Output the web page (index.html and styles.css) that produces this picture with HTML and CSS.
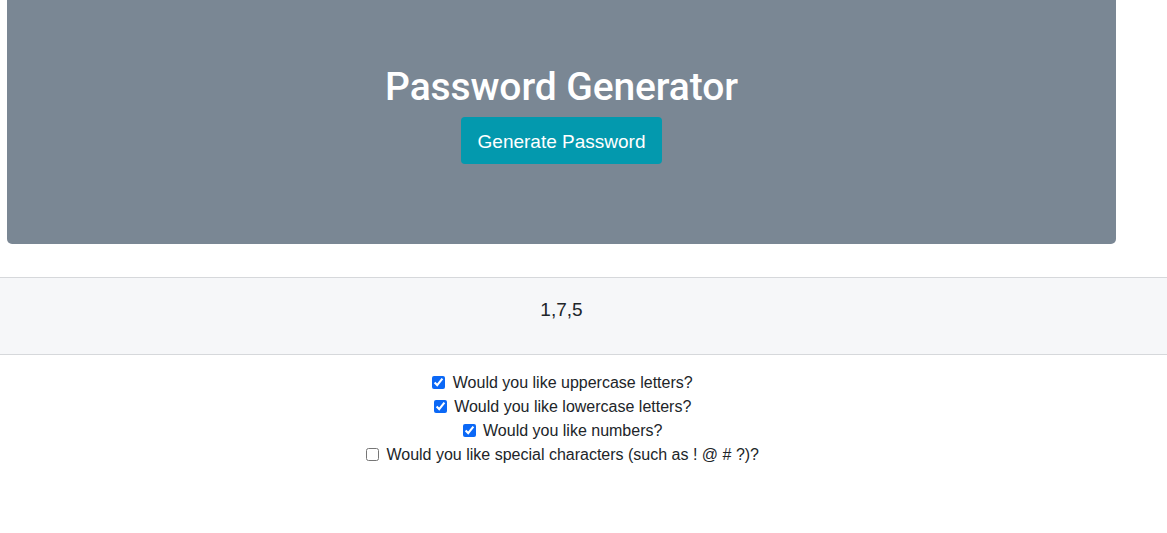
FILE: index.html
```html
<!DOCTYPE html>
<html lang="en">
<head>
<meta charset="utf-8">
<title>Password Generator</title>
<link rel="stylesheet" href="styles.css">
</head>
<body>
  <header class="jumbotron">
    <h1 class="title">Password Generator</h1>
    <button class="btn-generate" type="button">Generate Password</button>
  </header>
  <section class="result-bar">
    <p class="result">1,7,5</p>
  </section>
  <section class="options">
    <label class="option"><input type="checkbox" checked> Would you like uppercase letters?</label>
    <label class="option"><input type="checkbox" checked> Would you like lowercase letters?</label>
    <label class="option"><input type="checkbox" checked> Would you like numbers?</label>
    <label class="option"><input type="checkbox"> Would you like special characters (such as ! @ # ?)?</label>
  </section>
</body>
</html>
```

FILE: styles.css
```css
html, body {
  margin: 0;
  padding: 0;
}
body {
  font-family: "Liberation Sans", Arial, sans-serif;
  font-size: 16px;
  line-height: 1.5;
  color: #212529;
  background: #ffffff;
  width: 1167px;
  height: 533px;
  overflow: hidden;
}
.jumbotron {
  margin: 0 51px 33px 7px;
  padding: 63px 32px 80px;
  background: #7a8794;
  border-radius: 0 0 5px 5px;
  display: flex;
  flex-direction: column;
  align-items: center;
}
.title {
  margin: 0 0 6px;
  font-family: Roboto, "Liberation Sans", sans-serif;
  font-weight: 500;
  font-size: 39px;
  line-height: 48px;
  letter-spacing: -0.1px;
  color: #ffffff;
}
.btn-generate {
  font-family: "Liberation Sans", Arial, sans-serif;
  font-size: 19px;
  line-height: 30px;
  height: 47px;
  padding: 10px 17px 7px;
  white-space: nowrap;
  color: #ffffff;
  background: #0399ae;
  border: 0;
  border-radius: 4px;
}
.result-bar {
  background: #f6f7f9;
  border-top: 1px solid #d6d8db;
  border-bottom: 1px solid #d6d8db;
  height: 76px;
  box-sizing: content-box;
}
.result {
  margin: 0 51px 0 7px;
  padding-top: 17px;
  text-align: center;
  font-size: 19px;
  line-height: 30px;
}
.options {
  margin: 16px 51px 0 5px;
  display: flex;
  flex-direction: column;
  align-items: center;
}
.option {
  line-height: 24px;
  height: 24px;
}
.option input {
  width: 13px;
  height: 13px;
  margin: 0 3px 0 4px;
  vertical-align: -1px;
  accent-color: #0b68f6;
}
```
